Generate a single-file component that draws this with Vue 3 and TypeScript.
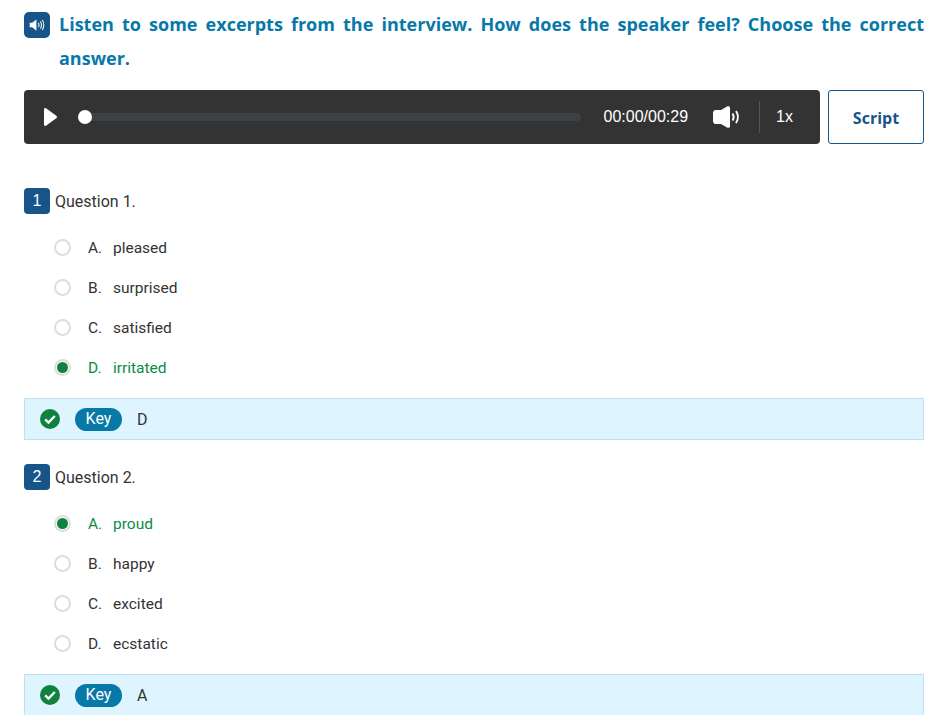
<template>
  <div class="page">
    <div class="head">
      <span class="head-icon">
        <svg width="18" height="18" viewBox="0 0 16 16">
          <path d="M1.500 6h2.200L7.500 3v10L3.700 10H1.500z" fill="#fff" />
          <path d="M9.300 6c.7 1.200.7 2.800 0 4M11 4.800c1.200 2 1.200 4.400 0 6.400M12.700 3.600c1.700 2.800 1.700 6 0 8.800" fill="none" stroke="#fff" stroke-width="0.9" />
        </svg>
      </span>
      <p class="head-text">Listen to some excerpts from the interview. How does the speaker feel? Choose the correct answer.</p>
    </div>

    <div class="player-row">
      <div class="player">
        <svg class="play" width="13" height="18" viewBox="0 0 13 18">
          <path d="M0 1.500v15c0 1.200 1 1.800 2 1.200l10.300-7.500c.9-.6.900-1.800 0-2.400L2 .3C1 -.3 0 .3 0 1.500z" fill="#fff" />
        </svg>
        <div class="track"><span class="knob"></span></div>
        <span class="time">00:00/00:29</span>
        <svg class="vol" width="28" height="24" viewBox="0 0 28 24">
          <path d="M1 8.500C1 6.500 2 5 3.500 5H9l6-3.500c1.500-.8 3-.2 3 1.300v18.400c0 1.500-1.500 2.100-3 1.300L9 19H3.500C2 19 1 17.500 1 15.500z" fill="#fff" />
          <path d="M20.500 8.500c1.300 2 1.300 5 0 7M24 6c2.400 3.500 2.400 8.500 0 12" fill="none" stroke="#fff" stroke-width="2" />
        </svg>
        <span class="divider"></span>
        <span class="speed">1x</span>
      </div>
      <button class="script-btn">Script</button>
    </div>

    <section v-for="q in questions" :key="q.num" class="question">
      <div class="q-title">
        <span class="q-num">{{ q.num }}</span>
        <span>Question {{ q.num }}.</span>
      </div>
      <ul class="options">
        <li v-for="o in q.options" :key="o.letter" class="option" :class="{ selected: o.letter === q.answer }">
          <span class="radio"></span>
          <span class="letter">{{ o.letter }}.</span>
          <span>{{ o.text }}</span>
        </li>
      </ul>
      <div class="key-box">
        <svg width="20" height="20" viewBox="0 0 20 20">
          <circle cx="10" cy="10" r="10" fill="#0f8240" />
          <path d="M5.200 10.300l3.300 3.200 6.300-6.500" fill="none" stroke="#fff" stroke-width="2.400" />
        </svg>
        <span class="key-pill">Key</span>
        <span class="key-val">{{ q.answer }}</span>
      </div>
    </section>
  </div>
</template>

<script setup lang="ts">
interface Option {
  letter: string
  text: string
}

interface Question {
  num: number
  answer: string
  options: Option[]
}

const questions: Question[] = [
  {
    num: 1,
    answer: "D",
    options: [
      { letter: "A", text: "pleased" },
      { letter: "B", text: "surprised" },
      { letter: "C", text: "satisfied" },
      { letter: "D", text: "irritated" },
    ],
  },
  {
    num: 2,
    answer: "A",
    options: [
      { letter: "A", text: "proud" },
      { letter: "B", text: "happy" },
      { letter: "C", text: "excited" },
      { letter: "D", text: "ecstatic" },
    ],
  },
]
</script>

<style>
html,
body {
  margin: 0;
  height: 715px;
  overflow: hidden;
  background: #fff;
}
</style>

<style scoped>
.page {
  padding: 7px 25px 0 24px;
  font-family: Roboto, "Noto Sans", sans-serif;
  font-size: 16px;
  color: #333;
}
.head {
  display: flex;
  gap: 9px;
  align-items: flex-start;
}
.head-icon {
  flex: none;
  width: 26px;
  height: 26px;
  margin-top: 5px;
  border-radius: 5px;
  background: #17548a;
  display: flex;
  align-items: center;
  justify-content: center;
}
.head-text {
  margin: 0;
  font-family: "Open Sans", sans-serif;
  font-size: 18px;
  font-weight: 700;
  line-height: 34px;
  color: #0779a8;
  text-align: justify;
}
.player-row {
  display: flex;
  gap: 8px;
  margin-top: 15px;
}
.player {
  flex: 1;
  height: 54px;
  box-sizing: border-box;
  padding: 0 27px 0 20px;
  display: flex;
  align-items: center;
  background: #333;
  border-radius: 4px;
  color: #fff;
}
.track {
  flex: 1;
  position: relative;
  height: 8px;
  margin: 0 23px 0 21px;
  border-radius: 4px;
  background: #3e4144;
}
.knob {
  position: absolute;
  left: 0;
  top: -3px;
  width: 14px;
  height: 14px;
  border-radius: 50%;
  background: #fff;
}
.time {
  font-family: "Liberation Sans", sans-serif;
  font-size: 16px;
}
.vol {
  margin-left: 24px;
}
.divider {
  width: 1px;
  height: 32px;
  margin: 0 16px 0 19px;
  background: #555;
}
.speed {
  font-family: "Liberation Sans", sans-serif;
  font-size: 16px;
}
.script-btn {
  width: 96px;
  height: 54px;
  padding-top: 2px;
  background: #fff;
  border: 1px solid #17548a;
  border-radius: 3px;
  font-family: "Open Sans", sans-serif;
  font-size: 16px;
  font-weight: 700;
  color: #17548a;
}
.question {
  margin-top: 44px;
}
.question + .question {
  margin-top: 24px;
}
.q-title {
  display: flex;
  align-items: center;
  gap: 5px;
  height: 26px;
}
.q-num {
  width: 26px;
  height: 26px;
  border-radius: 4px;
  background: #17548a;
  color: #fff;
  font-family: "Liberation Sans", sans-serif;
  text-align: center;
  line-height: 26px;
}
.options {
  list-style: none;
  margin: 14px 0 10px;
  padding: 0;
  font-size: 15.5px;
}
.option {
  display: flex;
  align-items: center;
  height: 40px;
  padding-left: 30px;
}
.radio {
  width: 17px;
  height: 17px;
  margin-top: -1px;
  box-sizing: border-box;
  border: 2px solid #ddd;
  border-radius: 50%;
  margin-right: 17px;
  background-clip: content-box;
}
.letter {
  width: 25px;
}
.selected {
  color: #0b8a4a;
}
.selected .radio {
  padding: 1px;
  background-color: #0f8240;
}
.key-box {
  display: flex;
  align-items: center;
  height: 42px;
  box-sizing: border-box;
  padding-left: 15px;
  background: #def4fe;
  border: 1px solid #c0dfee;
}
.key-pill {
  margin-left: 15px;
  width: 47px;
  height: 23px;
  line-height: 22px;
  text-align: center;
  border-radius: 12px;
  background: #0779a8;
  color: #fff;
}
.key-val {
  margin-left: 15px;
}
</style>
